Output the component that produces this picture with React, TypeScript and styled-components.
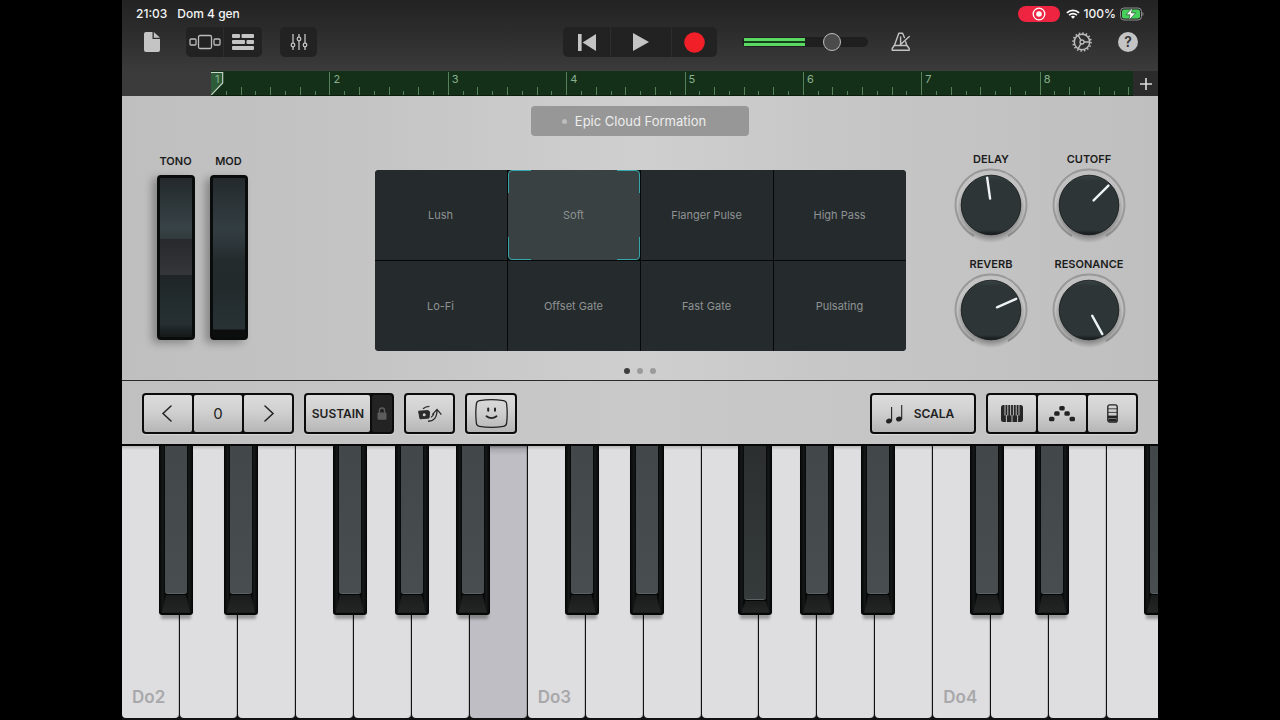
import React, { useState } from "react";
import styled, { createGlobalStyle, css } from "styled-components";

const GlobalStyle = createGlobalStyle`
  * { box-sizing: border-box; }
  html, body { margin: 0; background: #000; }
  body { font-family: Inter, "Liberation Sans", sans-serif; }
  button { font: inherit; color: inherit; border: 0; padding: 0; margin: 0; background: none; cursor: pointer; }
  svg { display: block; }
`;

const Device = styled.main`
  min-height: 100vh;
  margin: 0 122px;
  display: flex;
  flex-direction: column;
  overflow: hidden;
`;

/* ---------- header ---------- */

const Header = styled.header`
  padding: 0 14px 14px;
  background: linear-gradient(#232323, #2b2b2b 40%, #3b3b3b);
  color: #c8c8c8;
`;

const StatusBar = styled.div`
  height: 27px;
  padding-top: 1px;
  display: flex;
  align-items: center;
  justify-content: space-between;
  color: #f4f4f4;
  font-size: 12px;
  font-weight: 500;
  line-height: 16px;
`;

const StatusGroup = styled.div<{ $gap: number }>`
  display: flex;
  align-items: center;
  gap: ${(p) => p.$gap}px;
`;

const RecordingPill = styled.button`
  width: 42px;
  height: 16px;
  border-radius: 8px;
  background: #ee2440;
  display: grid;
  place-items: center;
  margin-right: 2px;
`;

const Toolbar = styled.div`
  display: grid;
  grid-template-columns: 1fr auto 1fr;
  align-items: center;
  height: 30px;
`;

const ToolbarLeft = styled.div`
  display: flex;
  align-items: center;
  gap: 18px;
`;

const ToolbarRight = styled.div`
  display: flex;
  align-items: center;
  padding-left: 25px;
  padding-right: 6px;
  gap: 23px;
`;

const EndTools = styled.div`
  display: flex;
  gap: 26px;
  margin-left: auto;
`;

const ToolGroup = styled.div`
  display: flex;
  height: 30px;
  border-radius: 5px;
  background: #222;
`;

const ToolButton = styled.button<{ $width: number }>`
  width: ${(p) => p.$width}px;
  display: grid;
  place-items: center;
  & + & { border-left: 1px solid #2d2d2d; }
`;

const PlainButton = styled.button`
  display: grid;
  place-items: center;
`;

const DocButton = styled(PlainButton)`
  width: 32px;
  height: 30px;
`;

const Volume = styled.input<{ $level: number }>`
  appearance: none;
  width: 126px;
  height: 20px;
  margin: 0;
  background: none;
  &::-webkit-slider-runnable-track {
    height: 10px;
    border-radius: 5px;
    background:
      linear-gradient(#1f1f1f 0 1px, #5cd962 1px 4px, #14401a 4px 6px, #5cd962 6px 9px, #1f1f1f 9px)
        2px 0 / ${(p) => p.$level}px 10px no-repeat,
      #1f1f1f;
  }
  &::-webkit-slider-thumb {
    appearance: none;
    width: 18px;
    height: 18px;
    margin-top: -4px;
    border-radius: 50%;
    border: 1px solid #bdbdbd;
    background: #4b4b4b;
  }
`;

/* ---------- ruler ---------- */

const Ruler = styled.div`
  display: flex;
  height: 25px;
  background: #3b3b3b;
`;

const RulerGutter = styled.div`
  flex: 0 0 89px;
`;

const Timeline = styled.div`
  position: relative;
  flex: 1;
  display: flex;
  overflow: hidden;
  background: #143018;
  border-bottom: 1px solid #0c1d0e;
`;

const Bar = styled.div`
  position: relative;
  flex: 0 0 12.84%;
  display: grid;
  grid-template-columns: repeat(8, 1fr);
  align-items: end;
`;

const Tick = styled.span<{ $height: number }>`
  height: ${(p) => p.$height}px;
  border-left: 1px solid #55825a;
`;

const BarNumber = styled.span`
  position: absolute;
  left: 4px;
  top: 2px;
  font-size: 11px;
  line-height: 12px;
  color: #8bb08f;
`;

const Playhead = styled.svg`
  position: absolute;
  left: 0;
  top: 0;
`;

const AddButton = styled(PlainButton)`
  flex: 0 0 25px;
  background: #2b2b2b;
`;

/* ---------- synth panel ---------- */

const Panel = styled.section`
  height: 284px;
  padding: 10px 0 0;
  background: linear-gradient(90deg, #bfbfbf, #c3c3c3 20%, #cfcfcf 50%, #c6c6c6 70%, #bfbfbf);
`;

const PresetButton = styled.button`
  width: 218px;
  height: 30px;
  margin: 0 auto;
  border-radius: 4px;
  background: #979797;
  color: #ededed;
  font-size: 13px;
  display: flex;
  align-items: center;
  justify-content: center;
  gap: 8px;
  padding-right: 12px;
`;

const PresetDot = styled.span`
  width: 5px;
  height: 5px;
  border-radius: 50%;
  background: #bdbdbd;
`;

const PanelBody = styled.div`
  display: grid;
  grid-template-columns: 1fr 531px 1fr;
  align-items: start;
  padding: 16px 32px 0;
`;

const Wheels = styled.div`
  display: flex;
  gap: 14px;
  padding: 2px 0 0 2px;
`;

const ControlLabel = styled.label`
  font-size: 11px;
  font-weight: 600;
  line-height: 14px;
  color: #1c1c1c;
  white-space: nowrap;
`;

const WheelBox = styled.div`
  width: 39px;
  display: flex;
  flex-direction: column;
  align-items: center;
  gap: 7px;
`;

const tonoFace = `linear-gradient(#23282b 0, #2a3235 18px, #384347 50px, #303a3d 61px, #27292c 61px, #343639 97px, #1f2527 97px, #222b2d 120px, #263033 145px, #171b1c 157px)`;
const modFace = `linear-gradient(#23282b 0, #2a3235 20px, #323d41 50px, #303a3e 60px, #242b2d 82px, #222a2c 110px, #283235 151px, #0c0e0e 152px)`;

const Wheel = styled.div<{ $face: "tono" | "mod" }>`
  position: relative;
  width: 38px;
  height: 165px;
  border: 3px solid #0a0c0c;
  border-radius: 4px;
  background: ${(p) => (p.$face === "tono" ? tonoFace : modFace)};
  box-shadow: -5px 3px 8px rgba(0, 0, 0, 0.3);
`;

const HiddenRange = styled.input`
  position: absolute;
  inset: 0;
  width: 100%;
  height: 100%;
  margin: 0;
  opacity: 0;
`;

const PadColumn = styled.div`
  display: flex;
  flex-direction: column;
  align-items: center;
  gap: 17px;
  padding-top: 18px;
`;

const PadGrid = styled.div`
  width: 100%;
  display: grid;
  grid-template-columns: repeat(4, 1fr);
  grid-auto-rows: 90px;
  gap: 1px;
  border-radius: 4px;
  overflow: hidden;
  background: #070909;
`;

const Pad = styled.button<{ $active: boolean }>`
  position: relative;
  background: ${(p) => (p.$active ? "#394142" : "#252b2d")};
  color: #8e9293;
  font-size: 11px;
  line-height: 14px;
  ${(p) =>
    p.$active &&
    css`
      border-radius: 4px;
      &::after {
        content: "";
        position: absolute;
        inset: 0;
        border: 1px solid #35a7ab;
        border-radius: 4px;
        mask:
          linear-gradient(#000 0 0) left top / 23px 23px no-repeat,
          linear-gradient(#000 0 0) right top / 23px 23px no-repeat,
          linear-gradient(#000 0 0) left bottom / 23px 23px no-repeat,
          linear-gradient(#000 0 0) right bottom / 23px 23px no-repeat;
      }
    `}
`;

const Dots = styled.div`
  display: flex;
  gap: 7px;
`;

const Dot = styled.span<{ $on: boolean }>`
  width: 6px;
  height: 6px;
  border-radius: 50%;
  background: ${(p) => (p.$on ? "#3d3d3d" : "#9b9b9b")};
`;

const Knobs = styled.div`
  justify-self: end;
  display: grid;
  grid-template-columns: repeat(2, 74px);
  column-gap: 24px;
  row-gap: 13px;
`;

const KnobBox = styled.div`
  position: relative;
  display: flex;
  flex-direction: column;
  align-items: center;
  gap: 2px;
`;

/* ---------- control strip ---------- */

const Strip = styled.section`
  height: 66px;
  padding: 12px 20px 0;
  border-top: 1px solid #2a2a2a;
  border-bottom: 2px solid #070707;
  background: linear-gradient(90deg, #c0c0c0, #c9c9c9 50%, #c1c1c1);
  display: flex;
  align-items: flex-start;
  justify-content: space-between;
`;

const StripSide = styled.div`
  display: flex;
  gap: 10px;
`;

const KeyGroup = styled.div`
  display: flex;
  gap: 2px;
  padding: 2px;
  border-radius: 4px;
  background: #0b0b0b;
  box-shadow: 0 1px 1px rgba(255, 255, 255, 0.35);
`;

const StripButton = styled.button<{ $width: number; $dark?: boolean }>`
  width: ${(p) => p.$width}px;
  height: 37px;
  border-radius: 2px;
  background: ${(p) => (p.$dark ? "#232323" : "linear-gradient(#dcdcdc, #d0d0d0 45%, #b6b6b6)")};
  display: flex;
  align-items: center;
  justify-content: center;
  color: #222;
  font-size: 12px;
  font-weight: 600;
`;

const ScaleButton = styled(StripButton)`
  gap: 11px;
  padding-right: 6px;
`;

const OctaveValue = styled.output`
  width: 48px;
  height: 37px;
  border-radius: 2px;
  background: linear-gradient(#dcdcdc, #d0d0d0 45%, #b6b6b6);
  color: #222;
  font-size: 15px;
  line-height: 37px;
  text-align: center;
`;

/* ---------- keyboard ---------- */

const Keyboard = styled.section`
  flex: 1;
  min-height: 240px;
  display: flex;
  padding-bottom: 2px;
  overflow: hidden;
  background: #111;
`;

const Slot = styled.div`
  position: relative;
  flex: 0 0 5.594%;
  display: flex;
`;

const WhiteKey = styled.button<{ $pressed: boolean }>`
  flex: 1;
  display: flex;
  align-items: flex-end;
  margin-right: 1px;
  padding: 0 10px 11px;
  border-radius: 0 0 4px 4px;
  box-shadow: inset -1px 0 0 rgba(0, 0, 0, 0.15);
  background: ${(p) =>
    p.$pressed
      ? "linear-gradient(#77767c, #a9a8ae 3px, #bfbec4 9px)"
      : "linear-gradient(#b9b9bb, #dedee0 4px)"};
  color: #a8a8aa;
  font-size: 17px;
  font-weight: 600;
  line-height: 20px;
`;

const BlackKey = styled.button<{ $overhang: number; $pressed: boolean }>`
  position: absolute;
  z-index: 1;
  top: 0;
  right: -${(p) => p.$overhang}px;
  width: 34px;
  height: 62%;
  padding: 0 5px ${(p) => (p.$pressed ? 13 : 19)}px;
  border: solid #050606;
  border-width: 0 1px 2px;
  border-radius: 0 0 3px 3px;
  background: linear-gradient(90deg, #090a0a, #161919 3px, #050606 5px, #050606 27px, #161919 29px, #090a0a);
  box-shadow: 0 6px 3px -2px rgba(0, 0, 0, 0.3);
  display: flex;

  &::after {
    content: "";
    position: absolute;
    left: 2px;
    right: 2px;
    bottom: 0;
    height: ${(p) => (p.$pressed ? 12 : 18)}px;
    background: linear-gradient(#1a1c1c, #242626);
    clip-path: polygon(4px 0, calc(100% - 4px) 0, 100% 100%, 0 100%);
  }
`;

const KeyCap = styled.span<{ $pressed: boolean }>`
  flex: 1;
  border-radius: 0 0 3px 3px;
  border-bottom: 1px solid #5a6264;
  background: ${(p) => (p.$pressed ? "linear-gradient(#2b2f2f, #353a3a)" : "linear-gradient(#42484a, #484e50)")};
`;

/* ---------- icons ---------- */

const DocIcon = () => (
  <svg width="18" height="22" viewBox="0 0 18 22" fill="#c4c4c4">
    <path d="M3 1h6.5v7H17v11a2 2 0 0 1-2 2H3a2 2 0 0 1-2-2V3a2 2 0 0 1 2-2z" />
    <path d="M10.8 1L17 6.8h-6.2z" />
  </svg>
);

const BrowserIcon = () => (
  <svg width="32" height="16" viewBox="0 0 32 16" fill="none" stroke="#bcbcbc" strokeWidth="1.3">
    <rect x="9.5" y="1.5" width="13" height="13" rx="1.5" />
    <rect x="1" y="5" width="6" height="6" rx="1" />
    <rect x="25" y="5" width="6" height="6" rx="1" />
  </svg>
);

const TracksIcon = () => (
  <svg width="22" height="16" viewBox="0 0 22 16" fill="#c4c4c4">
    <rect x="0" y="0" width="8" height="4" rx="1" />
    <rect x="9.5" y="0" width="12.5" height="4" rx="1" />
    <rect x="0" y="6" width="13" height="4" rx="1" />
    <rect x="14.5" y="6" width="7.5" height="4" rx="1" />
    <rect x="0" y="12" width="22" height="4" rx="1" />
  </svg>
);

const MixerIcon = () => (
  <svg width="18" height="18" viewBox="0 0 18 18" fill="none" stroke="#c4c4c4" strokeWidth="1.3">
    <path d="M3 1v9M3 14v3M9 1v3M9 8v9M15 1v9M15 14v3" />
    <circle cx="3" cy="12" r="1.8" />
    <circle cx="9" cy="6" r="1.8" />
    <circle cx="15" cy="12" r="1.8" />
  </svg>
);

const RewindIcon = () => (
  <svg width="18" height="17" viewBox="0 0 18 17" fill="#c4c4c4">
    <rect x="0" y="0" width="3.6" height="17" />
    <path d="M18 0v17L4.6 8.5z" />
  </svg>
);

const PlayIcon = () => (
  <svg width="16" height="18" viewBox="0 0 16 18" fill="#c4c4c4">
    <path d="M0 0l16 9L0 18z" />
  </svg>
);

const RecordIcon = () => (
  <svg width="21" height="21" viewBox="0 0 21 21">
    <circle cx="10.5" cy="10.5" r="10.3" fill="#f01f28" />
  </svg>
);

const MetronomeIcon = () => (
  <svg width="20" height="20" viewBox="0 0 20 20" fill="none" stroke="#c4c4c4" strokeWidth="1.4" strokeLinejoin="round" strokeLinecap="round">
    <path d="M13.4 5.6L11.6 1.2H7.8L3.6 13l-2.4 3.5v1.7h17v-1.7L15.6 13l-1-3.2" />
    <path d="M3.6 13.5h12M9.6 5v6.5M9 13L18.3 4.6" />
  </svg>
);

const GearIcon = () => (
  <svg width="20" height="20" viewBox="0 0 20 20" fill="none" stroke="#bdbdbd">
    <circle cx="10" cy="10" r="7.7" strokeWidth="1.5" />
    <circle cx="10" cy="10" r="9" strokeWidth="1.6" strokeDasharray="1.5 2.034" />
    <circle cx="10" cy="10" r="2" strokeWidth="1.3" />
    <path d="M12 10h6M9 8.3L6 3.2M9 11.7l-3 5.1" strokeWidth="1.4" />
  </svg>
);

const HelpBadge = styled.span`
  width: 20px;
  height: 20px;
  border-radius: 50%;
  background: #c4c4c4;
  color: #333;
  font-size: 14px;
  font-weight: 600;
  line-height: 20px;
  text-align: center;
`;

const WifiIcon = () => (
  <svg width="14" height="10" viewBox="0 0 14 10" fill="none" stroke="#fff" strokeWidth="1.7">
    <path d="M.9 3.9a8.6 8.6 0 0 1 12.2 0M3.1 6.2a5.5 5.5 0 0 1 7.8 0" />
    <path d="M7 9.8L4.9 7.7a3 3 0 0 1 4.2 0z" fill="#fff" stroke="none" />
  </svg>
);

const BatteryIcon = () => (
  <svg width="24" height="14" viewBox="0 0 24 14">
    <rect x=".5" y="1" width="21" height="12" rx="3.5" fill="none" stroke="#8d8d8d" />
    <rect x="2" y="2.5" width="18" height="9" rx="2.3" fill="#45d15b" />
    <path d="M22.5 5v4c1.3-.4 1.3-3.6 0-4z" fill="#8d8d8d" />
    <path d="M12.6.6L6 7.8h4L8.8 13.4l6.9-7.5h-4.2z" fill="#fff" stroke="#2b4a30" strokeWidth=".7" />
  </svg>
);

const Chevron = ({ flip }: { flip?: boolean }) => (
  <svg width="14" height="17" viewBox="0 0 14 17" fill="none" stroke="#222" strokeWidth="1.5" strokeLinecap="round">
    <path d={flip ? "M4 1l8 7.5L4 16" : "M10 1L2 8.5 10 16"} />
  </svg>
);

const LockIcon = () => (
  <svg width="10" height="13" viewBox="0 0 10 13">
    <rect x=".5" y="5.5" width="9" height="7.2" rx="1" fill="#5c5c5c" />
    <path d="M2.4 6V3.6a2.6 2.6 0 0 1 5.2 0V6" fill="none" stroke="#5c5c5c" strokeWidth="1.3" />
  </svg>
);

const GlideIcon = () => (
  <svg width="24" height="18" viewBox="0 0 24 18">
    <path d="M.6 6.200L10 5.6l1.6 1.2-.6 6.2-9 .8z" fill="#2a2a2a" stroke="#2a2a2a" strokeLinejoin="round" />
    <circle cx="6.2" cy="9.8" r="1.5" fill="#cfcfcf" />
    <path d="M5 3.8C6.8 2.2 8.6 1.5 11.4 1.4" fill="none" stroke="#2a2a2a" strokeWidth="1.3" />
    <path d="M10 16.2c5.6.4 9-3.6 9-11.2M14.3 9.6L19 4.4l4.4 5.2M13 12.2c1.5-.8 2.3-2 2.8-3.6" fill="none" stroke="#2a2a2a" strokeWidth="1.3" />
  </svg>
);

const FaceIcon = () => (
  <svg width="33" height="29" viewBox="0 0 33 29" fill="none" stroke="#222" strokeWidth="1.3" strokeLinecap="round">
    <path d="M4.5 1.6Q16.5 -.2 28.5 1.6Q31.3 2 31.6 4.8Q32.8 14.5 31.6 24.2Q31.3 27 28.5 27.4Q16.5 29.2 4.5 27.4Q1.7 27 1.4 24.2Q.2 14.5 1.4 4.8Q1.7 2 4.5 1.6z" />
    <path d="M13.2 9.6v2.2M20 9.6v2.2" strokeWidth="2" />
    <path d="M11.5 17.3q5 3.6 10 0" strokeWidth="1.8" />
  </svg>
);

const NotesIcon = () => (
  <svg width="17" height="20" viewBox="0 0 17 20" fill="#222">
    <ellipse cx="3" cy="17" rx="3" ry="2.4" transform="rotate(-20 3 17)" />
    <ellipse cx="13" cy="15" rx="3" ry="2.4" transform="rotate(-20 13 15)" />
    <path d="M5.6 3v14M15.7 1v14" stroke="#222" strokeWidth="1.1" />
  </svg>
);

const KeysIcon = () => (
  <svg width="22" height="17" viewBox="0 0 22 17">
    <rect width="22" height="17" rx="2.5" fill="#262626" />
    <path
      d="M4 0v10.500M6.800 0v10.500M5.400 10V17M9.600 0v10.500M12.400 0v10.500M11 10V17M15.200 0v10.500M18 0v10.500M16.600 10V17"
      fill="none"
      stroke="#cdcdcd"
      strokeWidth=".9"
    />
  </svg>
);

const ArpIcon = () => (
  <svg width="26" height="16" viewBox="0 0 26 16" fill="#222">
    <rect x="10.3" y="0" width="5.4" height="4.4" rx="1.5" />
    <rect x="5.2" y="5.3" width="5.4" height="4.4" rx="1.5" />
    <rect x="15.4" y="5.3" width="5.4" height="4.4" rx="1.5" />
    <rect x="0" y="10.8" width="5.4" height="4.4" rx="1.5" />
    <rect x="20.6" y="10.8" width="5.4" height="4.4" rx="1.5" />
  </svg>
);

const RibbonIcon = () => (
  <svg width="11" height="19" viewBox="0 0 11 19" fill="none" stroke="#222">
    <rect x=".8" y=".8" width="9.4" height="17.4" rx="2" strokeWidth="1.3" />
    <path d="M1 4.8h9M1 8.4h9" strokeWidth=".8" />
    <path d="M1 11.8h9v2.2H1zM1.5 14.8h8v2.8h-8z" fill="#222" strokeWidth=".3" />
  </svg>
);

const FlagIcon = () => (
  <Playhead width="13" height="25" viewBox="0 0 13 25">
    <path d="M0 1.5h11.7V12L0 24.5z" fill="#2f5c38" />
    <path d="M0 1.5h11.7V12L0 24.3" fill="none" stroke="#c9d9ca" strokeWidth="1.1" />
  </Playhead>
);

/* ---------- parts ---------- */

function Knob({ label, angle }: { label: string; angle: number }) {
  const id = label.toLowerCase();
  return (
    <KnobBox>
      <ControlLabel htmlFor={id}>{label}</ControlLabel>
      <svg width="74" height="76" viewBox="-37 -37 74 76">
        <defs>
          <linearGradient id={`${id}-face`} x1="0" y1="0" x2="0" y2="1">
            <stop offset="0" stopColor="#3a4445" />
            <stop offset=".1" stopColor="#2d3536" />
            <stop offset=".92" stopColor="#2d3536" />
            <stop offset="1" stopColor="#131718" />
          </linearGradient>
          <radialGradient id={`${id}-shade`}>
            <stop offset=".72" stopColor="#000" stopOpacity=".4" />
            <stop offset="1" stopColor="#000" stopOpacity="0" />
          </radialGradient>
        </defs>
        <path d="M-17 31A35.4 35.4 0 1 1 17 31" fill="none" stroke="#999" strokeWidth="2" />
        <circle cy="4" r="34" fill={`url(#${id}-shade)`} />
        <circle r="29.8" fill={`url(#${id}-face)`} stroke="#101414" strokeWidth=".8" />
        <path d="M0-27.5V-6.5" stroke="#eef2f2" strokeWidth="2.4" strokeLinecap="round" transform={`rotate(${angle})`} />
      </svg>
      <HiddenRange id={id} type="range" min="-150" max="151" defaultValue={angle} />
    </KnobBox>
  );
}

const PADS = ["Lush", "Soft", "Flanger Pulse", "High Pass", "Lo-Fi", "Offset Gate", "Fast Gate", "Pulsating"];
const NOTES = ["Do", "Re", "Mi", "Fa", "Sol", "La", "Si"];
/* How far each sharp reaches past the right edge of its white key. */
const SHARPS: Record<string, number> = { Do: 13, Re: 20, Fa: 13, Sol: 17, La: 20 };
const KEYS = Array.from({ length: 18 }, (_, i) => ({ note: NOTES[i % 7], octave: 2 + Math.floor(i / 7) }));

export default function App() {
  const [pad, setPad] = useState("Soft");
  return (
    <>
      <GlobalStyle />
      <Device>
        <Header>
          <StatusBar>
            <StatusGroup $gap={10}>
              <span>21:03</span>
              <span>Dom 4 gen</span>
            </StatusGroup>
            <StatusGroup $gap={4}>
              <RecordingPill aria-label="Registrazione schermo">
                <svg width="14" height="14" viewBox="0 0 14 14">
                  <circle cx="7" cy="7" r="5.8" fill="none" stroke="#fff" strokeWidth="1.3" />
                  <circle cx="7" cy="7" r="2.8" fill="#fff" />
                </svg>
              </RecordingPill>
              <WifiIcon />
              <span>100%</span>
              <BatteryIcon />
            </StatusGroup>
          </StatusBar>
          <Toolbar>
            <ToolbarLeft>
              <DocButton aria-label="I miei brani"><DocIcon /></DocButton>
              <ToolGroup>
                <ToolButton $width={37} aria-label="Browser"><BrowserIcon /></ToolButton>
                <ToolButton $width={39} aria-label="Tracce"><TracksIcon /></ToolButton>
              </ToolGroup>
              <ToolGroup>
                <ToolButton $width={37} aria-label="Mixer"><MixerIcon /></ToolButton>
              </ToolGroup>
            </ToolbarLeft>
            <ToolGroup>
              <ToolButton $width={47} aria-label="Inizio"><RewindIcon /></ToolButton>
              <ToolButton $width={61} aria-label="Riproduci"><PlayIcon /></ToolButton>
              <ToolButton $width={46} aria-label="Registra"><RecordIcon /></ToolButton>
            </ToolGroup>
            <ToolbarRight>
              <Volume type="range" aria-label="Volume" $level={61} min="0" max="100" defaultValue={75} />
              <PlainButton aria-label="Metronomo"><MetronomeIcon /></PlainButton>
              <EndTools>
                <PlainButton aria-label="Impostazioni"><GearIcon /></PlainButton>
                <PlainButton aria-label="Aiuto"><HelpBadge>?</HelpBadge></PlainButton>
              </EndTools>
            </ToolbarRight>
          </Toolbar>
        </Header>

        <Ruler>
          <RulerGutter />
          <Timeline>
            <FlagIcon />
            {[1, 2, 3, 4, 5, 6, 7, 8].map((n) => (
              <Bar key={n}>
                {[0, 1, 2, 3, 4, 5, 6, 7].map((t) => (
                  <Tick key={t} $height={t === 0 ? (n === 1 ? 0 : 23) : t % 2 ? 4 : 8} />
                ))}
                <BarNumber>{n}</BarNumber>
              </Bar>
            ))}
          </Timeline>
          <AddButton aria-label="Aggiungi sezione">
            <svg width="12" height="12" viewBox="0 0 12 12" stroke="#ddd" strokeWidth="1.6">
              <path d="M6 0v12M0 6h12" />
            </svg>
          </AddButton>
        </Ruler>

        <Panel>
          <PresetButton><PresetDot />Epic Cloud Formation</PresetButton>
          <PanelBody>
            <Wheels>
              <WheelBox>
                <ControlLabel htmlFor="tono">TONO</ControlLabel>
                <Wheel $face="tono"><HiddenRange id="tono" type="range" /></Wheel>
              </WheelBox>
              <WheelBox>
                <ControlLabel htmlFor="mod">MOD</ControlLabel>
                <Wheel $face="mod"><HiddenRange id="mod" type="range" /></Wheel>
              </WheelBox>
            </Wheels>
            <PadColumn>
              <PadGrid>
                {PADS.map((p) => (
                  <Pad key={p} $active={p === pad} onClick={() => setPad(p)}>{p}</Pad>
                ))}
              </PadGrid>
              <Dots>
                <Dot $on />
                <Dot $on={false} />
                <Dot $on={false} />
              </Dots>
            </PadColumn>
            <Knobs>
              <Knob label="DELAY" angle={-8} />
              <Knob label="CUTOFF" angle={45} />
              <Knob label="REVERB" angle={66} />
              <Knob label="RESONANCE" angle={151} />
            </Knobs>
          </PanelBody>
        </Panel>

        <Strip>
          <StripSide>
            <KeyGroup>
              <StripButton $width={48} aria-label="Ottava inferiore"><Chevron /></StripButton>
              <OctaveValue>0</OctaveValue>
              <StripButton $width={48} aria-label="Ottava superiore"><Chevron flip /></StripButton>
            </KeyGroup>
            <KeyGroup>
              <StripButton $width={64}>SUSTAIN</StripButton>
              <StripButton $width={20} $dark aria-label="Blocca sustain"><LockIcon /></StripButton>
            </KeyGroup>
            <KeyGroup>
              <StripButton $width={47} aria-label="Glissando"><GlideIcon /></StripButton>
            </KeyGroup>
            <KeyGroup>
              <StripButton $width={48} aria-label="Controlli viso"><FaceIcon /></StripButton>
            </KeyGroup>
          </StripSide>
          <StripSide>
            <KeyGroup>
              <ScaleButton $width={102}><NotesIcon />SCALA</ScaleButton>
            </KeyGroup>
            <KeyGroup>
              <StripButton $width={48} aria-label="Tastiera"><KeysIcon /></StripButton>
              <StripButton $width={48} aria-label="Arpeggiatore"><ArpIcon /></StripButton>
              <StripButton $width={48} aria-label="Layout tastiera"><RibbonIcon /></StripButton>
            </KeyGroup>
          </StripSide>
        </Strip>

        <Keyboard>
          {KEYS.map(({ note, octave }) => {
            const name = `${note}${octave}`;
            const sharpPressed = name === "Fa3";
            return (
              <Slot key={name}>
                <WhiteKey $pressed={name === "Si2"} aria-label={name}>
                  {note === "Do" && name}
                </WhiteKey>
                {note in SHARPS && (
                  <BlackKey $overhang={SHARPS[note]} $pressed={sharpPressed} aria-label={`${name} diesis`}>
                    <KeyCap $pressed={sharpPressed} />
                  </BlackKey>
                )}
              </Slot>
            );
          })}
        </Keyboard>
      </Device>
    </>
  );
}
